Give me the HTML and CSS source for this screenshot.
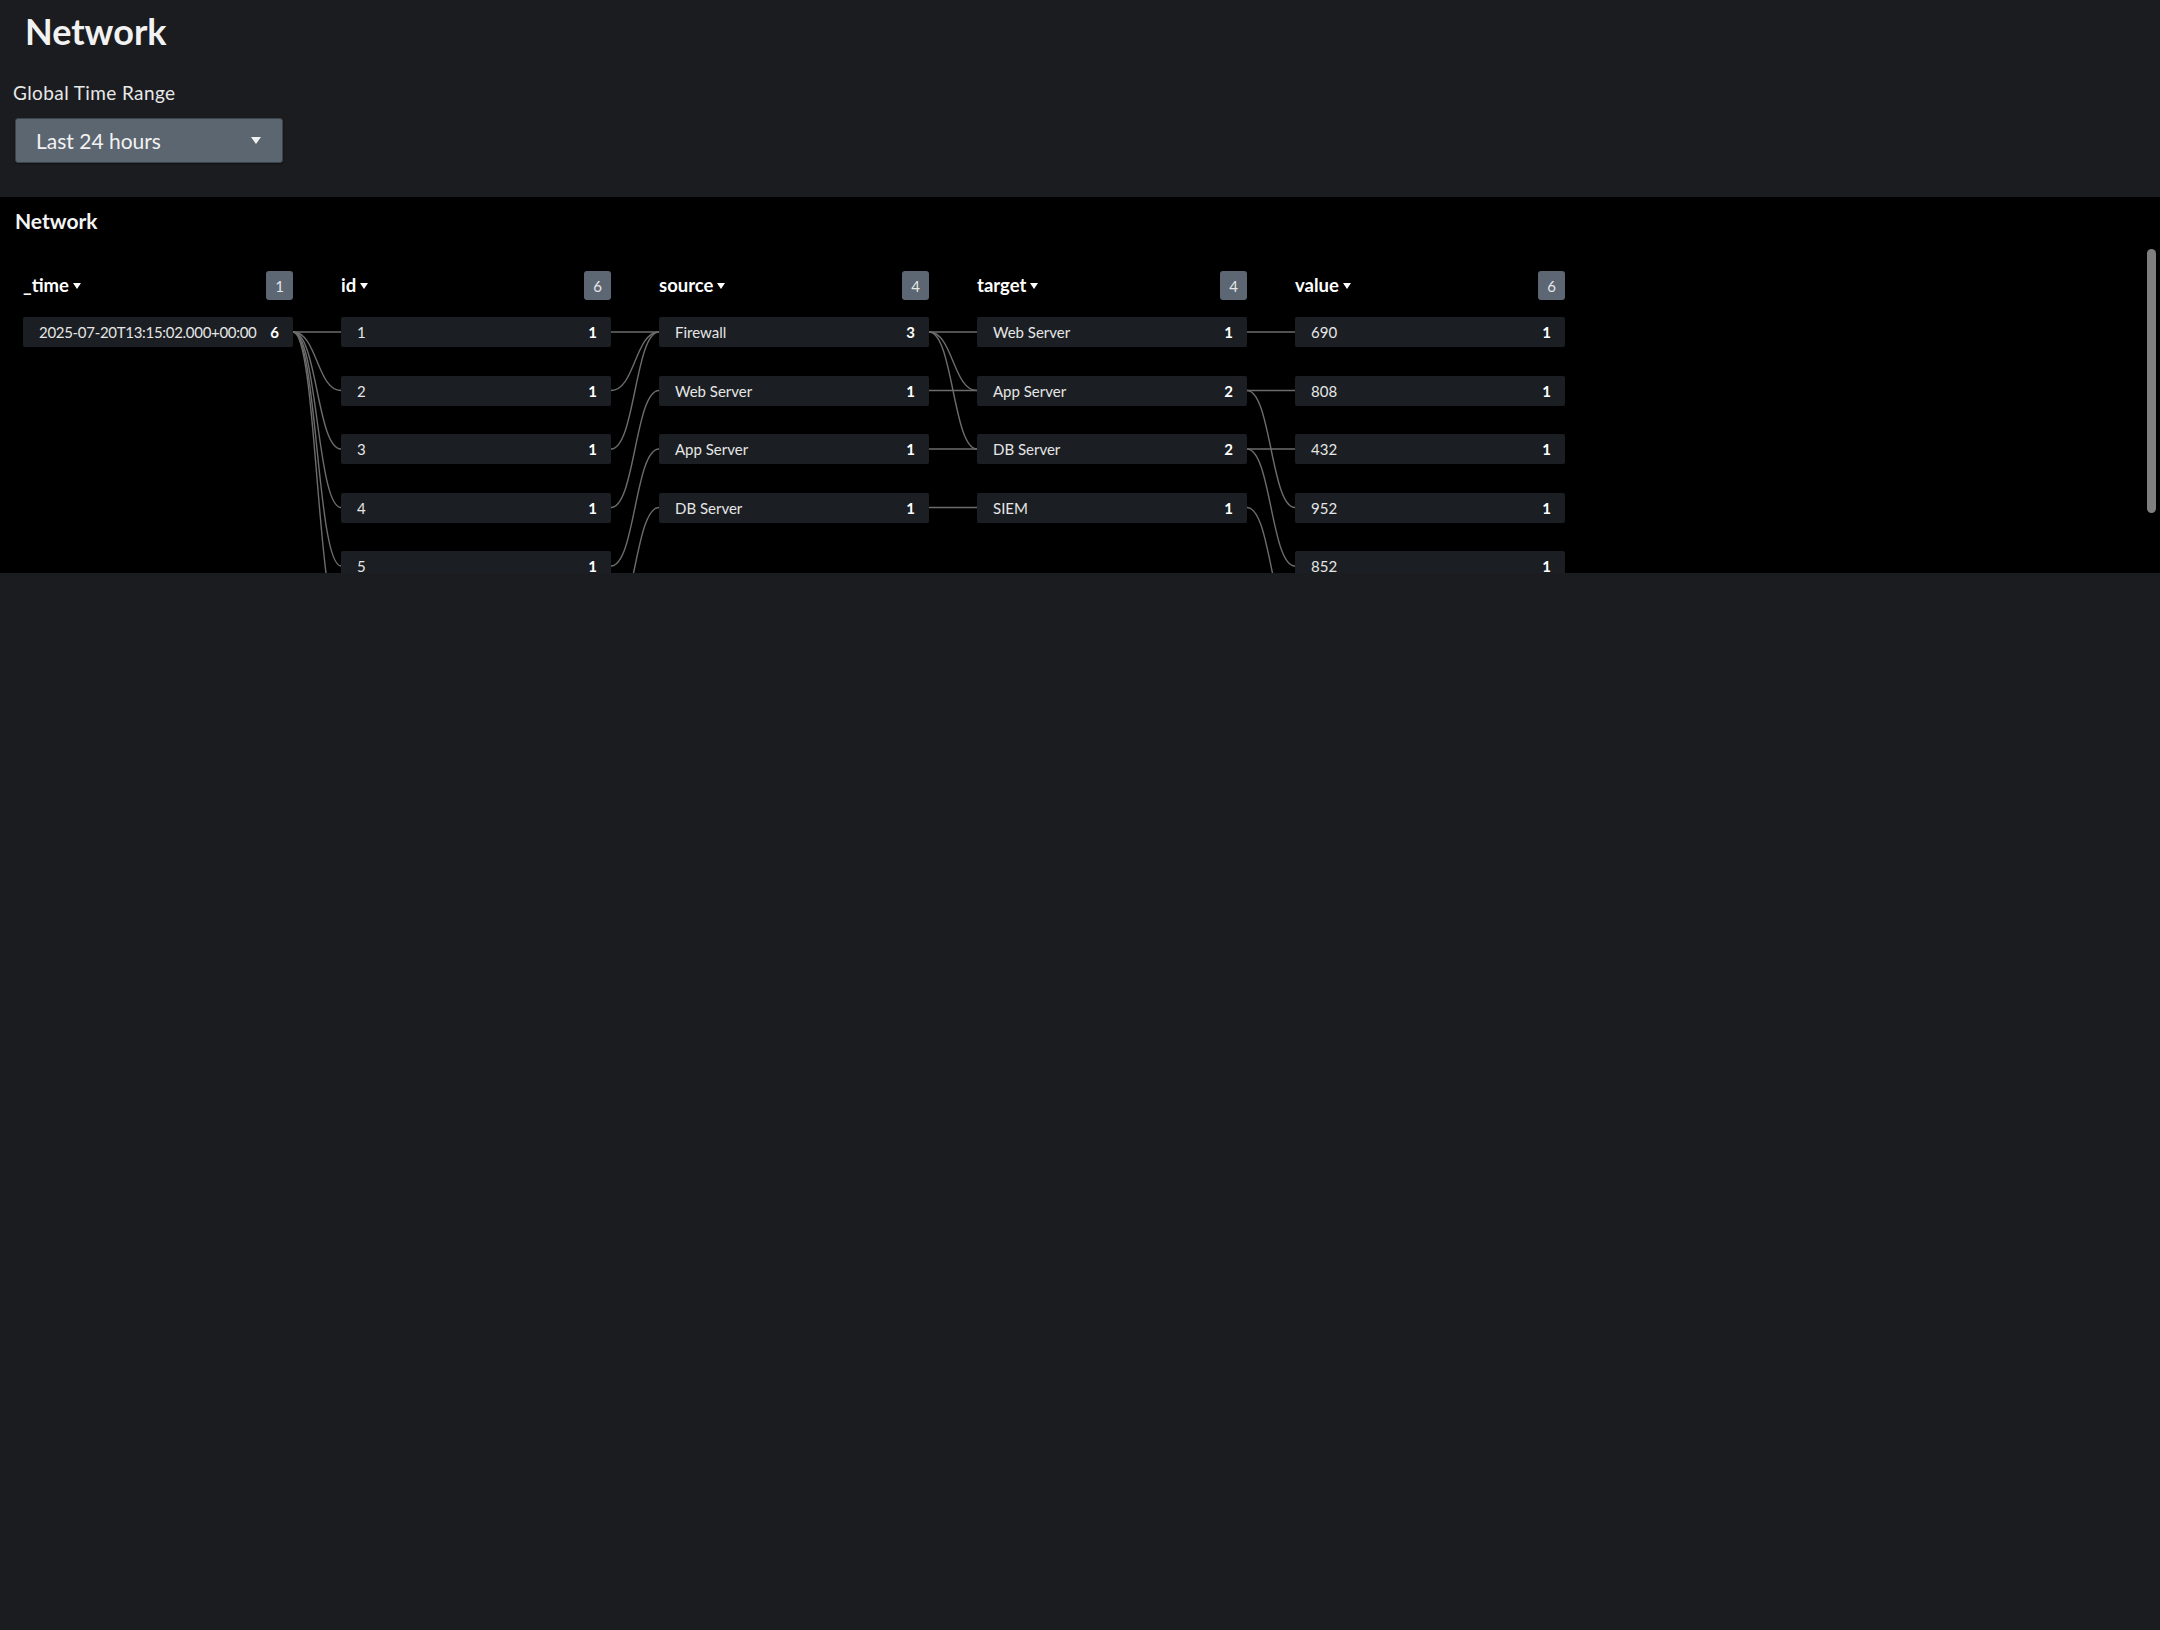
FILE: index.html
```html
<!DOCTYPE html>
<html lang="en">
<head>
<meta charset="utf-8">
<title>Network</title>
<link rel="stylesheet" href="styles.css">
</head>
<body>
<header class="dash-header">
  <h1 class="dash-title">Network</h1>
  <div class="input">
    <label class="input-label">Global Time Range</label>
    <button class="dropdown" type="button">
      <span>Last 24 hours</span>
      <svg class="dropdown-caret" width="10" height="7" viewBox="0 0 10 7"><polygon points="0,0 10,0 5,7" fill="#f2f2f2"/></svg>
    </button>
  </div>
</header>

<section class="panel">
  <h2 class="panel-title">Network</h2>
  <div class="graph">
    <svg class="links" width="2160" height="420" viewBox="0 0 2160 420">
      <g fill="none" stroke="#6c6c6c" stroke-width="1.4">
        <path d="M293 61 C317 61 317 61 341 61"/>
        <path d="M293 61 C317 61 317 119.5 341 119.5"/>
        <path d="M293 61 C317 61 317 178 341 178"/>
        <path d="M293 61 C317 61 317 236.5 341 236.5"/>
        <path d="M293 61 C317 61 317 295 341 295"/>
        <path d="M293 61 C317 61 317 353.5 341 353.5"/>

        <path d="M611 61 C635 61 635 61 659 61"/>
        <path d="M611 119.5 C635 119.5 635 61 659 61"/>
        <path d="M611 178 C635 178 635 61 659 61"/>
        <path d="M611 236.5 C635 236.5 635 119.5 659 119.5"/>
        <path d="M611 295 C635 295 635 178 659 178"/>
        <path d="M611 353.5 C635 353.5 635 236.5 659 236.5"/>

        <path d="M929 61 C953 61 953 61 977 61"/>
        <path d="M929 61 C953 61 953 119.5 977 119.5"/>
        <path d="M929 61 C953 61 953 178 977 178"/>
        <path d="M929 119.5 C953 119.5 953 119.5 977 119.5"/>
        <path d="M929 178 C953 178 953 178 977 178"/>
        <path d="M929 236.5 C953 236.5 953 236.5 977 236.5"/>

        <path d="M1247 61 C1271 61 1271 61 1295 61"/>
        <path d="M1247 119.5 C1271 119.5 1271 119.5 1295 119.5"/>
        <path d="M1247 178 C1271 178 1271 178 1295 178"/>
        <path d="M1247 119.5 C1271 119.5 1271 236.5 1295 236.5"/>
        <path d="M1247 178 C1271 178 1271 295 1295 295"/>
        <path d="M1247 236.5 C1271 236.5 1271 353.5 1295 353.5"/>
      </g>
    </svg>

    <div class="col">
      <div class="col-head">
        <span class="col-name">_time<svg class="sort" width="8" height="6" viewBox="0 0 8 6"><polygon points="0,0 8,0 4,6" fill="#ffffff"/></svg></span>
        <span class="badge">1</span>
      </div>
      <div class="nodes">
        <div class="node node-time"><span>2025-07-20T13:15:02.000+00:00</span><b>6</b></div>
      </div>
    </div>

    <div class="col">
      <div class="col-head">
        <span class="col-name">id<svg class="sort" width="8" height="6" viewBox="0 0 8 6"><polygon points="0,0 8,0 4,6" fill="#ffffff"/></svg></span>
        <span class="badge">6</span>
      </div>
      <div class="nodes">
        <div class="node"><span>1</span><b>1</b></div>
        <div class="node"><span>2</span><b>1</b></div>
        <div class="node"><span>3</span><b>1</b></div>
        <div class="node"><span>4</span><b>1</b></div>
        <div class="node"><span>5</span><b>1</b></div>
        <div class="node"><span>6</span><b>1</b></div>
      </div>
    </div>

    <div class="col">
      <div class="col-head">
        <span class="col-name">source<svg class="sort" width="8" height="6" viewBox="0 0 8 6"><polygon points="0,0 8,0 4,6" fill="#ffffff"/></svg></span>
        <span class="badge">4</span>
      </div>
      <div class="nodes">
        <div class="node"><span>Firewall</span><b>3</b></div>
        <div class="node"><span>Web Server</span><b>1</b></div>
        <div class="node"><span>App Server</span><b>1</b></div>
        <div class="node"><span>DB Server</span><b>1</b></div>
      </div>
    </div>

    <div class="col">
      <div class="col-head">
        <span class="col-name">target<svg class="sort" width="8" height="6" viewBox="0 0 8 6"><polygon points="0,0 8,0 4,6" fill="#ffffff"/></svg></span>
        <span class="badge">4</span>
      </div>
      <div class="nodes">
        <div class="node"><span>Web Server</span><b>1</b></div>
        <div class="node"><span>App Server</span><b>2</b></div>
        <div class="node"><span>DB Server</span><b>2</b></div>
        <div class="node"><span>SIEM</span><b>1</b></div>
      </div>
    </div>

    <div class="col">
      <div class="col-head">
        <span class="col-name">value<svg class="sort" width="8" height="6" viewBox="0 0 8 6"><polygon points="0,0 8,0 4,6" fill="#ffffff"/></svg></span>
        <span class="badge">6</span>
      </div>
      <div class="nodes">
        <div class="node"><span>690</span><b>1</b></div>
        <div class="node"><span>808</span><b>1</b></div>
        <div class="node"><span>432</span><b>1</b></div>
        <div class="node"><span>952</span><b>1</b></div>
        <div class="node"><span>852</span><b>1</b></div>
        <div class="node"><span>615</span><b>1</b></div>
      </div>
    </div>
  </div>
  <div class="scroll-thumb"></div>
</section>
</body>
</html>
```

FILE: styles.css
```css
html, body {
  margin: 0;
  padding: 0;
}

body {
  background: #1a1c20;
  color: #e8e8e8;
  font-family: Lato, "Noto Sans", "Liberation Sans", sans-serif;
  min-height: 1630px;
}

.dash-header {
  padding: 10px 0 34px 0;
}

.dash-title {
  margin: 0;
  padding-left: 25px;
  font-size: 36px;
  line-height: 43px;
  font-weight: 700;
  color: #f2f2f2;
}

.input {
  margin-top: 29px;
  padding-left: 13px;
}

.input-label {
  display: block;
  font-size: 19px;
  line-height: 22px;
  letter-spacing: 0.4px;
  color: #e8e8e8;
}

.dropdown {
  margin: 14px 0 0 2px;
  width: 268px;
  height: 45px;
  box-sizing: border-box;
  display: flex;
  align-items: center;
  justify-content: space-between;
  padding: 0 21px 0 20px;
  background: #5c6671;
  border: 1px solid #3c434b;
  border-radius: 3px;
  box-shadow: 0 1px 2px rgba(0, 0, 0, 0.4);
  font-family: inherit;
  font-size: 21px;
  color: #f2f2f2;
}

.panel {
  position: relative;
  height: 376px;
  box-sizing: border-box;
  padding-top: 12px;
  background: #000;
  overflow: hidden;
}

.panel-title {
  margin: 0;
  padding-left: 15px;
  font-size: 21px;
  line-height: 24px;
  font-weight: 700;
  color: #f4f4f4;
}

.graph {
  position: relative;
  margin-top: 38px;
  padding-left: 23px;
  display: flex;
  gap: 48px;
}

.links {
  position: absolute;
  left: 0;
  top: 0;
  overflow: visible;
}

.col {
  position: relative;
  width: 270px;
  display: flex;
  flex-direction: column;
}

.col-head {
  height: 29px;
  margin-bottom: 17px;
  display: flex;
  align-items: center;
  justify-content: space-between;
}

.col-name {
  display: inline-flex;
  align-items: center;
  gap: 4px;
  font-size: 18.5px;
  font-weight: 700;
  color: #ffffff;
  margin-top: -1px;
}

.sort {
  margin-top: 1px;
}

.badge {
  min-width: 27px;
  height: 29px;
  display: flex;
  align-items: center;
  justify-content: center;
  background: #5c6773;
  border-radius: 3px;
  font-size: 15px;
  color: #e4e6e8;
}

.nodes {
  display: flex;
  flex-direction: column;
  gap: 28.5px;
}

.node {
  height: 30px;
  box-sizing: border-box;
  display: flex;
  align-items: center;
  justify-content: space-between;
  padding: 0 14px 0 16px;
  background: #1b1e22;
  border-radius: 2px;
  font-size: 15px;
  color: #e6e6e6;
  white-space: nowrap;
}

.node-time span {
  letter-spacing: -0.3px;
}

.node b {
  font-weight: 700;
  color: #ffffff;
}

.scroll-thumb {
  position: absolute;
  right: 4px;
  top: 52px;
  width: 9px;
  height: 264px;
  border-radius: 5px;
  background: #7f7f7f;
}
```
